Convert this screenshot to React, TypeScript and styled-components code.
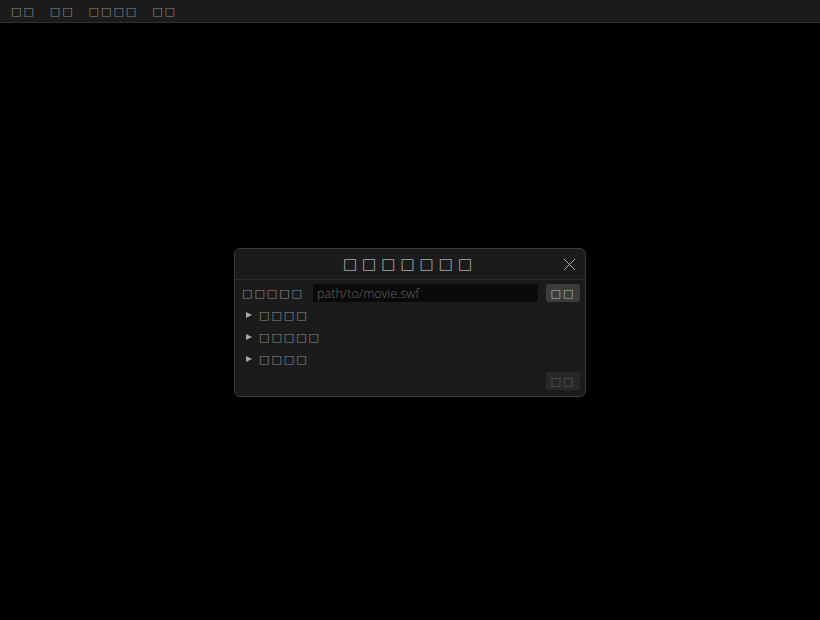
import styled, { createGlobalStyle } from "styled-components";

const GlobalStyle = createGlobalStyle`
  html, body {
    margin: 0;
    padding: 0;
    background: #000;
    font-family: "Noto Sans", "DejaVu Sans", sans-serif;
  }
  #root {
    height: 100vh;
    display: flex;
    flex-direction: column;
  }
`;

const MenuBar = styled.div`
  height: 22px;
  flex: none;
  background: #1b1b1b;
  border-bottom: 1px solid #2f2f2f;
  display: flex;
  align-items: center;
  padding-left: 11px;
  gap: 14px;
`;

const Tofu = styled.span<{ $size?: number; $color?: string; $spacing?: number }>`
  display: inline-block;
  font-family: "DejaVu Sans", sans-serif;
  font-size: ${(p) => p.$size ?? 11}px;
  letter-spacing: ${(p) => p.$spacing ?? 2}px;
  color: ${(p) => p.$color ?? "#8c8c8c"};
  line-height: 1;
  white-space: nowrap;
  opacity: 0.999;
`;

const Stage = styled.div`
  flex: 1;
  display: flex;
  align-items: center;
  justify-content: center;
  padding-top: 2px;
`;

const Dialog = styled.div`
  width: 350px;
  background: #1b1b1b;
  border: 1px solid #3a3a3a;
  border-radius: 6px;
  display: flex;
  flex-direction: column;
`;

const TitleBar = styled.div`
  height: 30px;
  position: relative;
  display: flex;
  align-items: center;
  justify-content: center;
  border-bottom: 1px solid #2f2f2f;
`;

const CloseButton = styled.button`
  position: absolute;
  right: 9px;
  top: 9px;
  width: 13px;
  height: 13px;
  padding: 0;
  border: none;
  background: transparent;
  display: flex;
`;

const Body = styled.div`
  display: flex;
  flex-direction: column;
  padding: 2px 5px 4px 7px;
`;

const Row = styled.div<{ $end?: boolean }>`
  height: 22px;
  display: flex;
  align-items: center;
  justify-content: ${(p) => (p.$end ? "flex-end" : "flex-start")};
`;

const PathInput = styled.input`
  width: 225px;
  height: 18px;
  box-sizing: border-box;
  margin: 0 8px 0 9px;
  padding: 0 4px;
  border: none;
  border-radius: 2px;
  background: #0a0a0a;
  color: #d0d0d0;
  font-family: "Noto Sans", sans-serif;
  font-weight: 300;
  font-size: 12.5px;
  outline: none;
  &::placeholder {
    color: #5c5c5c;
  }
`;

const Button = styled.button<{ $disabled?: boolean }>`
  width: 34px;
  height: 18px;
  padding: 0;
  border: none;
  border-radius: 3px;
  background: ${(p) => (p.$disabled ? "#282828" : "#3c3c3c")};
  display: flex;
  align-items: center;
  justify-content: center;
`;

const Header = styled.div`
  display: flex;
  align-items: center;
  gap: 7px;
  padding-left: 4px;
`;

const Arrow = () => (
  <svg width="6" height="6" viewBox="0 0 6 6">
    <polygon points="0,0 6,3 0,6" fill="#a8a8a8" />
  </svg>
);

const menus = ["□□", "□□", "□□□□", "□□"];
const sections = ["□□□□", "□□□□□", "□□□□"];

export default function App() {
  return (
    <>
      <GlobalStyle />
      <MenuBar>
        {menus.map((m, i) => (
          <Tofu key={i}>{m}</Tofu>
        ))}
      </MenuBar>
      <Stage>
        <Dialog>
          <TitleBar>
            <Tofu $size={15} $spacing={5} $color="#a8a8a8">
              □□□□□□□
            </Tofu>
            <CloseButton>
              <svg width="13" height="13" viewBox="0 0 13 13">
                <path d="M1 1L12 12M12 1L1 12" stroke="#b0b0b0" strokeWidth="1" />
              </svg>
            </CloseButton>
          </TitleBar>
          <Body>
            <Row>
              <Tofu>□□□□□</Tofu>
              <PathInput placeholder="path/to/movie.swf" />
              <Button>
                <Tofu $color="#b4b4b4">□□</Tofu>
              </Button>
            </Row>
            {sections.map((s, i) => (
              <Row key={i}>
                <Header>
                  <Arrow />
                  <Tofu>{s}</Tofu>
                </Header>
              </Row>
            ))}
            <Row $end>
              <Button $disabled>
                <Tofu $color="#5a5a5a">□□</Tofu>
              </Button>
            </Row>
          </Body>
        </Dialog>
      </Stage>
    </>
  );
}
